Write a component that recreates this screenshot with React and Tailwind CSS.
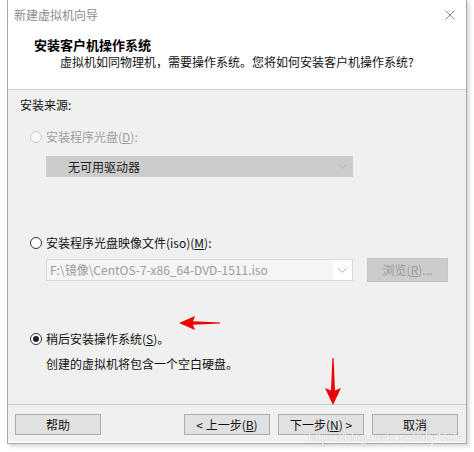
import React from "react";

function Radio({ checked = false, disabled = false }) {
  return (
    <div
      className={
        "w-[12px] h-[12px] rounded-full border flex items-center justify-center shrink-0 " +
        (disabled ? "border-[#cfcfcf] bg-[#f7f7f7]" : "border-[#333333] bg-white")
      }
    >
      {checked && <div className="w-[6px] h-[6px] rounded-full bg-[#222222]" />}
    </div>
  );
}

function Chevron() {
  return (
    <svg width="9" height="5" viewBox="0 0 9 5" className="shrink-0">
      <polyline points="0.5,0.5 4.5,4.5 8.5,0.5" fill="none" stroke="#b5b5b5" strokeWidth="1" />
    </svg>
  );
}

function Btn({ children, className = "" }) {
  return (
    <div
      className={
        "w-[86px] h-[21px] border border-[#adadad] bg-[#e1e1e1] flex items-center justify-center text-[12px] leading-[16px] text-[#111] " +
        className
      }
    >
      {children}
    </div>
  );
}

export default function App() {
  return (
    <div className="relative w-[474px] h-[452px] bg-white overflow-hidden font-['Noto_Sans_CJK_SC','Noto_Sans',sans-serif] text-[12px] leading-[16px] text-[#111]">
      <div className="ml-[7px] w-[460px] h-[444px] border-x border-b border-[#a8a8a8] flex flex-col shadow-[2px_2px_4px_rgba(0,0,0,0.18)]">
        {/* title bar */}
        <div className="h-[30px] bg-white flex items-center justify-between pl-[6px] pr-[11px]">
          <span className="text-[#8c8c8c]">新建虚拟机向导</span>
          <svg width="10" height="10" viewBox="0 0 10 10">
            <path d="M0.5 0.5 L9.5 9.5 M9.5 0.5 L0.5 9.5" stroke="#8a8a8a" strokeWidth="1" />
          </svg>
        </div>
        {/* header */}
        <div className="h-[60px] bg-white border-b border-[#cfcfcf] pt-[7px]">
          <div className="pl-[26px] font-bold text-[13px] leading-[16px] text-black">安装客户机操作系统</div>
          <div className="pl-[52px] mt-[1px] leading-[16px] text-[#111]">
            虚拟机如同物理机，需要操作系统。您将如何安装客户机操作系统?
          </div>
        </div>
        {/* body */}
        <div className="h-[315px] bg-[#f0f0f0] border-b border-[#c9c9c9] pt-[7px] flex flex-col">
          <div className="pl-[12px]">安装来源:</div>

          <div className="mt-[16px] pl-[22px] flex items-center gap-[4px] h-[16px]">
            <Radio disabled />
            <span className="text-[#a0a0a0]">
              安装程序光盘(<span className="underline">D</span>):
            </span>
          </div>
          <div className="mt-[11px] ml-[38px] w-[307px] h-[21px] bg-[#cccccc] flex items-center justify-between pl-[22px] pr-[6px]">
            <span className="text-[#222]">无可用驱动器</span>
            <Chevron />
          </div>

          <div className="mt-[58px] pl-[22px] flex items-center gap-[4px] h-[16px]">
            <Radio />
            <span>
              安装程序光盘映像文件(iso)(<span className="underline">M</span>):
            </span>
          </div>
          <div className="mt-[7px] ml-[38px] h-[24px] flex items-center">
            <div className="w-[307px] h-[22px] border border-[#d9d9d9] bg-white flex items-center">
              <div className="w-[286px] h-full bg-[#f5f5f5] pl-[3px] flex items-center text-[#9a9a9a]">
                F:\镜像\CentOS-7-x86_64-DVD-1511.iso
              </div>
              <div className="flex-1 flex justify-center">
                <Chevron />
              </div>
            </div>
            <div className="ml-[14px] w-[81px] h-[24px] bg-[#cccccc] border border-[#c4c4c4] flex items-center justify-center text-[#9a9a9a]">
              浏览(<span className="underline">R</span>)...
            </div>
          </div>

          <div className="mt-[49px] pl-[22px] flex items-center gap-[4px] h-[16px]">
            <Radio checked />
            <span>
              稍后安装操作系统(<span className="underline">S</span>)。
            </span>
          </div>
          <div className="mt-[9px] pl-[38px]">创建的虚拟机将包含一个空白硬盘。</div>
        </div>
        {/* footer */}
        <div className="h-[37px] bg-[#f0f0f0] pt-[9px] pl-[7px] pr-[8px] flex items-start">
          <Btn>帮助</Btn>
          <div className="ml-auto flex gap-[8px]">
            <Btn>
              &lt; 上一步(<span className="underline">B</span>)
            </Btn>
            <Btn>
              下一步(<span className="underline">N</span>) &gt;
            </Btn>
            <Btn>取消</Btn>
          </div>
        </div>
      </div>

      {/* red annotation arrows */}
      <svg className="absolute left-[179px] top-[316px]" width="42" height="14" viewBox="0 0 42 14">
        <polygon points="0,7 16,0 14,5.2 41,6.4 41,7.6 14,8.8 16,14" fill="#ee0000" />
      </svg>
      <svg className="absolute left-[325px] top-[358px]" width="16" height="48" viewBox="0 0 16 48">
        <polygon points="8,47 0,30 6,32.5 7.4,0 8.6,0 10,32.5 16,30" fill="#ee0000" />
      </svg>

      {/* watermark */}
      <div className="absolute left-[308px] top-[432px] text-[12px] leading-[12px] font-['Liberation_Sans',sans-serif] text-white [text-shadow:0_0_1px_rgba(0,0,0,0.35)] opacity-90">
        https://blog.csdn.net/tilly1574
      </div>
    </div>
  );
}
